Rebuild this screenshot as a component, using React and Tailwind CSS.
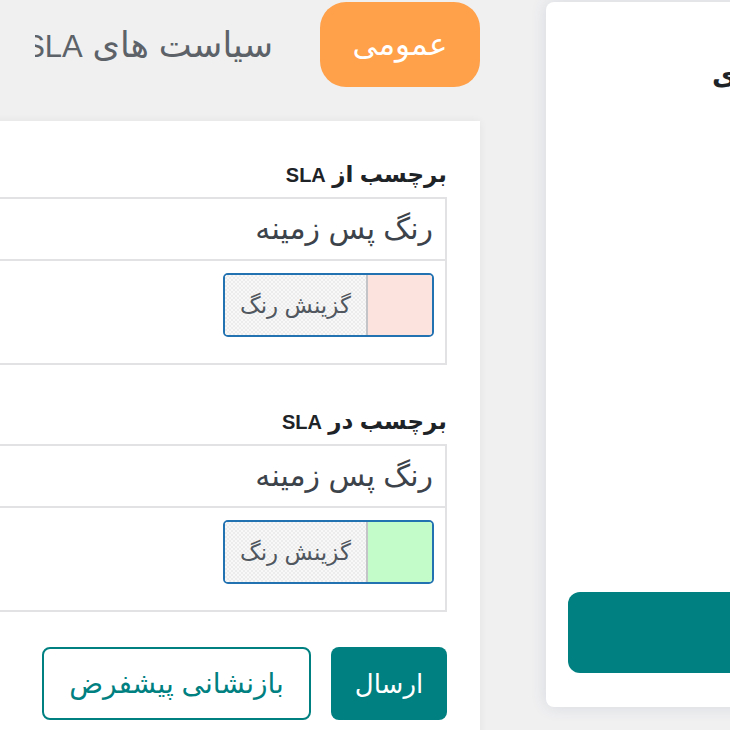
import React from "react";

const FONT = { fontFamily: '"Liberation Sans", "DejaVu Sans", sans-serif' };

function ColorPicker({ swatch }) {
  return (
    <div className="flex h-[64px] w-[211px] overflow-hidden rounded-[5px] border-2 border-[#2271b1]">
      <div className={`w-[66px] shrink-0 border-l-2 border-[#c3c4c7] ${swatch}`} />
      <div className="flex flex-1 items-center justify-center bg-[#f6f7f7] bg-[repeating-conic-gradient(#ececec_0_25%,#f8f8f8_0_50%)] bg-[length:4px_4px] text-[23px] leading-none text-[#50575e]">
        گزینش رنگ
      </div>
    </div>
  );
}

function LabelSection({ title }) {
  return (
    <h3 className="mb-[10px] h-[26px] text-[23px] font-bold leading-[26px] text-[#1d2327] whitespace-nowrap">
      {title} <span className="text-[20px]">SLA</span>
    </h3>
  );
}

function ColorTable({ swatch }) {
  return (
    <div className="border-2 border-[#e2e2e4]">
      <div className="flex h-[62px] items-center border-b-2 border-[#e2e2e4] pr-[12px] text-[30px] leading-none text-[#3c434a]">
        رنگ پس زمینه
      </div>
      <div className="pr-[11px] pt-[12px] pb-[26px]">
        <ColorPicker swatch={swatch} />
      </div>
    </div>
  );
}

export default function App() {
  return (
    <div className="h-[730px] w-[730px] overflow-hidden bg-[#f0f0f1]" style={FONT}>
      <div className="-ml-10 flex gap-[66px] pt-[2px]">
        <div dir="rtl" className="w-[520px] shrink-0">
          <div className="ml-[75px] flex items-center overflow-hidden">
            <div className="flex h-[85px] w-[160px] shrink-0 items-center justify-center rounded-[26px] bg-[#ffa04a] text-[31px] leading-none text-white">
              عمومی
            </div>
            <div className="shrink-0 pr-[47px] text-[35px] leading-none text-[#5c6268] whitespace-nowrap">
              سیاست های <span className="text-[31px]">SLA</span>
            </div>
          </div>

          <div className="mt-[34px] rounded-tl-[12px] bg-white pl-0 pr-[33px] pt-[40px] pb-[24px] shadow-[0_0_8px_rgba(0,0,0,0.06)]">
            <LabelSection title="برچسب از" />
            <ColorTable swatch="bg-[#fde3dd]" />
            <div className="mt-[43px]">
              <LabelSection title="برچسب در" />
              <ColorTable swatch="bg-[#c3fcc8]" />
            </div>
            <div className="mt-[35px] flex gap-[20px]">
              <button className="h-[73px] w-[116px] rounded-[8px] bg-[#008080] text-[26px] leading-none text-white">
                ارسال
              </button>
              <button className="h-[73px] w-[269px] rounded-[8px] border-2 border-[#008080] bg-white text-[28px] leading-none text-[#008080]">
                بازنشانی پیشفرض
              </button>
            </div>
          </div>
        </div>

        <div dir="rtl" className="flex h-[705px] w-[460px] shrink-0 flex-col rounded-[8px] bg-white px-[22px] pt-[56px] pb-[34px] shadow-[0_0_16px_rgba(60,80,110,0.14)]">
          <h2 className="pr-[118px] text-[27px] font-bold leading-[34px] text-[#1d2327]">ذخیره‌سازی</h2>
          <button className="mt-auto h-[81px] w-full rounded-[12px] bg-[#008080] text-[26px] text-white">
            ذخیره
          </button>
        </div>
      </div>
    </div>
  );
}
